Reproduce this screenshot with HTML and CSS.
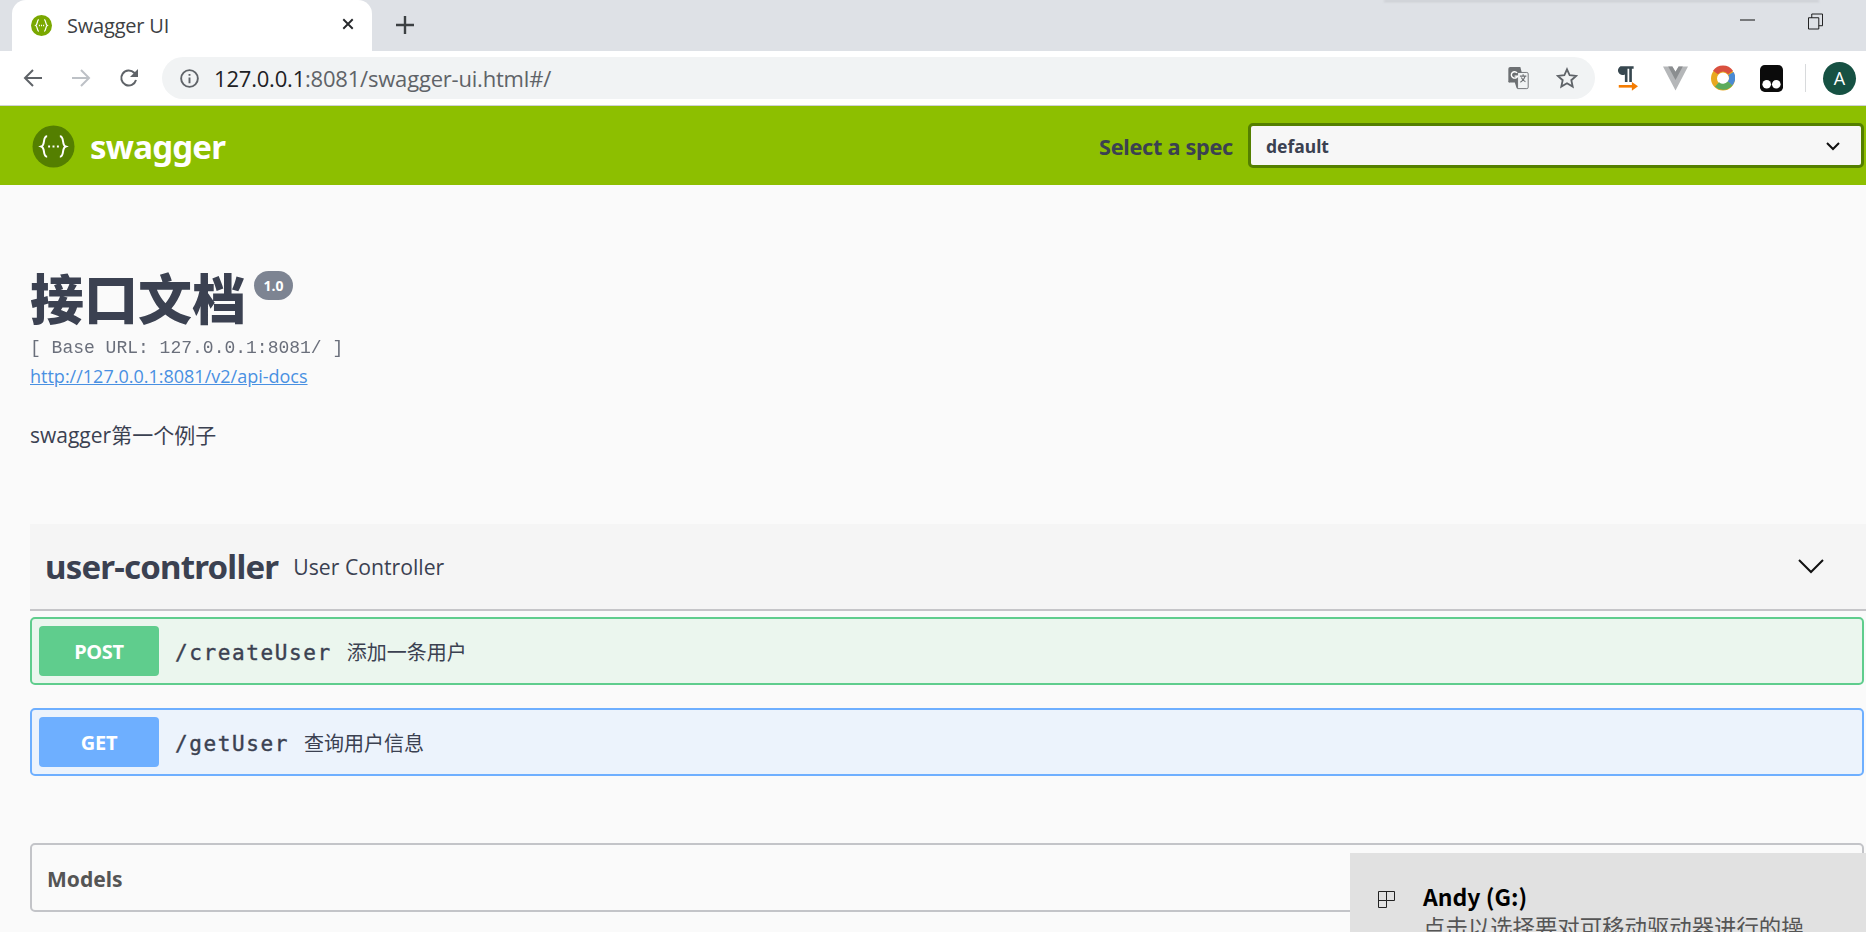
FILE: index.html
```html
<!DOCTYPE html>
<html lang="zh">
<head>
<meta charset="utf-8">
<title>Swagger UI</title>
<link rel="stylesheet" href="styles.css">
</head>
<body>
<header class="chrome">
  <div class="tabstrip">
    <div class="tab">
      <svg class="favicon" viewBox="0 0 20 20"><circle cx="10" cy="10" r="10" fill="#7aa800"/><path d="M7.5 4.5C5.5 4.5 6.5 9 4.5 10c2 1 1 5.500 3 5.500M12.500 4.500c2 0 1 4.500 3 5.500-2 1-1 5.500-3 5.500" fill="none" stroke="#fff" stroke-width="1.200"/><path d="M7.500 10h1M9.500 10h1M11.500 10h1" stroke="#fff" stroke-width="1.200"/></svg>
      <span class="tab-title">Swagger UI</span>
      <svg class="tab-close" viewBox="0 0 14 14"><path d="M1.500 1.500l11 11M12.500 1.500l-11 11" stroke="#26282b" stroke-width="2.200"/></svg>
    </div>
    <svg class="new-tab" viewBox="0 0 18 18"><path d="M9 0v18M0 9h18" stroke="#3c4043" stroke-width="2.400"/></svg>
    <div class="window-controls">
      <svg class="win-min" viewBox="0 0 15 2"><path d="M0 1h15" stroke="#111" stroke-width="1"/></svg>
      <svg class="win-restore" viewBox="0 0 16 17"><path d="M.5 4.500h11v12H.5zM4 4.500V.5h11.500v12.500H11.500" fill="none" stroke="#111"/></svg>
    </div>
  </div>
  <div class="toolbar">
    <svg class="nav-icon nav-back" viewBox="0 0 20 20"><path d="M19 10H2M10 2l-8 8 8 8" fill="none" stroke="#5f6368" stroke-width="2"/></svg>
    <svg class="nav-icon nav-forward" viewBox="0 0 20 20"><path d="M1 10h17M10 2l8 8-8 8" fill="none" stroke="#bdc1c6" stroke-width="2"/></svg>
    <svg class="nav-icon nav-reload" viewBox="0 0 20 20"><path d="M17 12a7.500 7.500 0 1 1-1.800-7.200L18 7.500" fill="none" stroke="#5f6368" stroke-width="2"/><path d="M19 1v8h-8z" fill="#5f6368"/></svg>
    <div class="omnibox">
      <svg class="info-icon" viewBox="0 0 20 20"><circle cx="10" cy="10" r="8.800" fill="none" stroke="#5f6368" stroke-width="2"/><path d="M10 9v6M10 5.200v2" stroke="#5f6368" stroke-width="2"/></svg>
      <span class="url"><span class="url-host">127.0.0.1</span>:8081/swagger-ui.html#/</span>
      <svg class="translate-icon" viewBox="0 0 22 26"><path d="M2 1h11l6 23H9L7 18H2a1.500 1.500 0 0 1-2-2V3a2 2 0 0 1 2-2z" fill="#6d7073"/><path d="M10 7h10a1.500 1.500 0 0 1 1.500 1.500V23a1.500 1.500 0 0 1-1.500 1.500H10z" fill="#f1f3f4" stroke="#6d7073" stroke-width="1"/><path d="M9.500 7.500a3.500 3.500 0 1 0 .5 3.500H6.800" fill="none" stroke="#fff" stroke-width="1.500"/><path d="M12.500 11h7M16 9v2M18 11c-.5 3-2.500 5-5 6.500M14 12.500c1 2 2.500 3.500 4.500 4.500" fill="none" stroke="#6d7073" stroke-width="1.200"/></svg>
      <svg class="star-icon" viewBox="0 0 24 24"><path d="M12 2.500l2.900 6.500 7.100.7-5.300 4.700 1.500 7-6.200-3.600-6.200 3.600 1.500-7L2 9.700 9.100 9z" fill="none" stroke="#5f6368" stroke-width="2"/></svg>
    </div>
    <div class="extensions">
      <svg class="ext ext-para" viewBox="0 0 24 29"><path d="M4 1h15v3h-2v15h-3V4h-2v15H9v-8.500A5 5 0 0 1 4 1z" fill="#37474f"/><path d="M2 24h16" stroke="#f57c00" stroke-width="3"/><path d="M17 19l7 5-7 5z" fill="#f57c00"/></svg>
      <svg class="ext ext-vue" viewBox="0 0 24 24"><path d="M0 1h9l3 5 3-5h9L12 24z" fill="#b5b7b9"/><path d="M5 1h4l3 5 3-5h4L12 14z" fill="#8b8e90"/></svg>
      <svg class="ext ext-ring" viewBox="0 0 24 26"><circle cx="12" cy="13" r="9" fill="none" stroke="#e8a820" stroke-width="6"/><path d="M4.500 7A9 9 0 0 1 19.500 7" fill="none" stroke="#d9503f" stroke-width="6"/><path d="M20 8a9 9 0 0 1-1 10" fill="none" stroke="#4a8ad4" stroke-width="6"/><path d="M19 18a9 9 0 0 1-13 1" fill="none" stroke="#5cab5c" stroke-width="6"/></svg>
      <svg class="ext ext-monkey" viewBox="0 0 24 28"><rect width="24" height="28" rx="5" fill="#0b0b0b"/><circle cx="7" cy="20" r="4.500" fill="#fff"/><circle cx="17" cy="20" r="4.500" fill="#fff"/></svg>
      <span class="toolbar-divider"></span>
      <span class="avatar">A</span>
    </div>
  </div>
</header>

<div class="topbar">
  <a class="brand">
    <svg class="brand-logo" viewBox="0 0 44 44"><circle cx="22" cy="22" r="21.500" fill="#547f00"/><path d="M15.500 11.500c-5 0-1.500 9-6 10.500 4.500 1.500 1 10.500 6 10.500M28.500 11.500c5 0 1.500 9 6 10.500-4.500 1.500-1 10.500-6 10.500" fill="none" stroke="#fff" stroke-width="2"/><path d="M16.500 22h2M21 22h2M25.500 22h2" stroke="#fff" stroke-width="2"/></svg>
    <span class="brand-name">swagger</span>
  </a>
  <div class="spec-picker">
    <span class="spec-label">Select a spec</span>
    <div class="spec-select">
      <span>default</span>
      <svg class="spec-chevron" viewBox="0 0 14 9"><path d="M1 1l6 6 6-6" fill="none" stroke="#111" stroke-width="2"/></svg>
    </div>
  </div>
</div>

<main class="page">
  <section class="info">
    <div class="title-row">
      <h1 class="title">接口文档</h1>
      <span class="version">1.0</span>
    </div>
    <pre class="base-url">[ Base URL: 127.0.0.1:8081/ ]</pre>
    <a class="spec-link">http://127.0.0.1:8081/v2/api-docs</a>
    <p class="description">swagger第一个例子</p>
  </section>

  <section class="tag-section">
    <div class="tag-header">
      <h2 class="tag-name">user-controller</h2>
      <span class="tag-desc">User Controller</span>
      <svg class="tag-chevron" viewBox="0 0 26 15"><path d="M1 1l12 12L25 1" fill="none" stroke="#111" stroke-width="2"/></svg>
    </div>
    <div class="op op-post">
      <span class="method">POST</span>
      <span class="path">/createUser</span>
      <span class="summary">添加一条用户</span>
    </div>
    <div class="op op-get">
      <span class="method">GET</span>
      <span class="path">/getUser</span>
      <span class="summary">查询用户信息</span>
    </div>
  </section>

  <section class="models">Models</section>
</main>

<div class="top-shadow"></div>
<aside class="toast">
  <svg class="toast-icon" viewBox="0 0 17 17"><path d="M.5 .5h16v9h-8v7h-8zM.5 9.500h8M8.500 .5v9" fill="none" stroke="#222"/></svg>
  <div class="toast-text">
    <div class="toast-title">Andy (G:)</div>
    <div class="toast-body">点击以选择要对可移动驱动器进行的操</div>
  </div>
</aside>
</body>
</html>
```
FILE: styles.css
```css
* { box-sizing: border-box; }
html, body { margin: 0; padding: 0; height: 932px; overflow: hidden; }
body { background: #fafafa; color: #3b4151; font-family: "Open Sans", "Noto Sans CJK SC", sans-serif; position: relative; width: 1866px; }

.chrome { background: #fff; }
.tabstrip { height: 51px; background: #dee1e6; display: flex; align-items: center; padding-left: 12px; }
.tab { width: 360px; height: 51px; background: #fff; border-radius: 14px 14px 0 0; display: flex; align-items: center; padding: 0 18px 0 19px; }
.favicon { width: 21px; height: 21px; margin-right: 15px; flex: none; }
.tab-title { font: 20px "Open Sans", sans-serif; color: #3c4043; flex: 1; letter-spacing: -0.200px; }
.tab-close { width: 12px; height: 12px; flex: none; margin-bottom: 3px; }
.new-tab { width: 18px; height: 18px; margin-left: 24px; margin-bottom: 2px; flex: none; }
.window-controls { margin-left: auto; display: flex; align-items: center; width: 134px; padding-left: 8px; margin-bottom: 8px; }
.win-min { width: 15px; height: 2px; margin-right: 53px; margin-top: -3px; }
.win-restore { width: 15px; height: 17px; }

.toolbar { height: 55px; display: flex; align-items: center; border-bottom: 1px solid #cfd2d4; padding: 0 0 0 23px; }
.nav-icon { width: 20px; height: 20px; flex: none; }
.nav-back { margin-right: 28px; }
.nav-forward { margin-right: 28px; }
.nav-reload { margin-right: 23px; }
.omnibox { width: 1433px; height: 42px; border-radius: 21px; background: #f1f3f4; display: flex; align-items: center; padding-left: 18px; flex: none; }
.info-icon { width: 19px; height: 19px; margin-right: 15px; flex: none; }
.url { font: 22px "Open Sans", sans-serif; color: #5f6368; flex: 1; letter-spacing: -0.200px; }
.url-host { color: #202124; }
.translate-icon { width: 21px; height: 24px; margin-right: 27px; flex: none; }
.star-icon { width: 22px; height: 22px; margin-right: 17px; flex: none; }
.extensions { display: flex; align-items: center; padding-left: 22px; flex: 1; }
.ext { flex: none; }
.ext-para { width: 21px; height: 28px; margin-right: 25px; }
.ext-vue { width: 25px; height: 26px; margin-right: 23px; }
.ext-ring { width: 24px; height: 29px; margin-right: 25px; }
.ext-monkey { width: 23px; height: 27px; margin-right: 22px; }
.toolbar-divider { width: 1px; height: 28px; background: #d8dadc; margin-right: 17px; }
.avatar { width: 33px; height: 33px; border-radius: 50%; background: #165143; color: #fff; font: 18px "Open Sans", sans-serif; display: flex; align-items: center; justify-content: center; }

.topbar { height: 79px; background: #8dbf00; display: flex; align-items: center; justify-content: space-between; padding: 0 2px 0 32px; }
.brand { display: flex; align-items: center; gap: 15px; padding-top: 2px; }
.brand-logo { width: 43px; height: 43px; }
.brand-name { font: 700 33px "Noto Sans", sans-serif; color: #fff; letter-spacing: -0.800px; }
.spec-picker { display: flex; align-items: center; gap: 15px; }
.spec-label { font: 700 21.700px "Noto Sans", sans-serif; color: #3b4151; letter-spacing: -0.300px; padding-top: 1px; }
.spec-select { width: 616px; height: 45px; border: 3px solid #547f00; border-radius: 5px; background: #f7f7f7; display: flex; align-items: center; justify-content: space-between; padding: 1px 21px 0 15px; font: 700 17.500px "Noto Sans", sans-serif; color: #3b4151; }
.spec-chevron { width: 14px; height: 9px; }

.page { padding: 0 2px 0 30px; }
.info { padding-top: 80px; }
.title-row { display: flex; align-items: flex-start; gap: 8px; height: 66px; }
.title { margin: 0; font: 900 54px/64px "Noto Sans CJK SC", sans-serif; color: #3b4151; }
.version { margin-top: 6px; width: 39px; height: 29px; border-radius: 15px; background: #7d8492; color: #fff; font: 700 14px/29px "Open Sans", sans-serif; text-align: center; }
.base-url { margin: 0; padding-top: 5px; font: 18px/24px "Liberation Mono", monospace; color: #3b4151; height: 33px; opacity: .75; }
.spec-link { display: block; font: 18px/24px "Open Sans", sans-serif; color: #4990e2; text-decoration: underline; }
.description { margin: 34px 0 0; font: 21px/26px "Open Sans", "Noto Sans CJK SC", sans-serif; color: #3b4151; }

.tag-section { margin: 76px -2px 0 0; }
.tag-header { height: 87px; background: #f5f5f5; border-bottom: 2px solid #c5c5c8; display: flex; align-items: center; padding: 0 42px 0 15px; }
.tag-name { margin: 0; font: 700 33px "Noto Sans", sans-serif; color: #3b4151; letter-spacing: -0.800px; }
.tag-desc { font: 21.200px "Open Sans", sans-serif; color: #3b4151; margin-left: 15px; flex: 1; }
.tag-chevron { width: 26px; height: 15px; }

.op { width: 1834px; height: 68px; border: 2px solid; border-radius: 5px; display: flex; align-items: center; padding-left: 7px; margin-top: 6px; }
.op-post { border-color: #5fcd8d; background: #ebf6ee; }
.op-get { border-color: #6eafff; background: #ecf3fc; margin-top: 23px; }
.method { width: 120px; height: 50px; border-radius: 4px; color: #fff; font: 700 20px/52px "Noto Sans", sans-serif; text-align: center; letter-spacing: -0.300px; }
.op-post .method { background: #5fcd8d; }
.op-get .method { background: #6eafff; }
.path { margin-left: 16px; padding-top: 3px; font: 400 21px "DejaVu Sans Mono", monospace; letter-spacing: 1.600px; color: #3b4151; -webkit-text-stroke: .4px #3b4151; }
.summary { margin-left: 15px; font: 20px "Noto Sans CJK SC", sans-serif; color: #3b4151; }

.models { width: 1834px; height: 69px; margin-top: 67px; border: 2px solid #c3c4c8; border-radius: 5px; padding: 2px 0 0 15px; display: flex; align-items: center; font: 700 21px "Noto Sans", sans-serif; color: #555; }

.top-shadow { position: absolute; left: 1384px; top: 0; width: 435px; height: 2px; background: #c8cbd0; filter: blur(1px); }
.toast { position: absolute; left: 1350px; top: 853px; width: 516px; height: 79px; background: #e1e1e1; display: flex; padding: 28px 0 0 28px; overflow: hidden; }
.toast-icon { width: 17px; height: 17px; margin: 10px 28px 0 0; flex: none; }
.toast-title { font: 600 23px/30px "Noto Sans CJK SC", "Noto Sans", sans-serif; color: #000; }
.toast-body { font: 22.400px/30px "Noto Sans CJK SC", sans-serif; color: #555; white-space: nowrap; }
```
